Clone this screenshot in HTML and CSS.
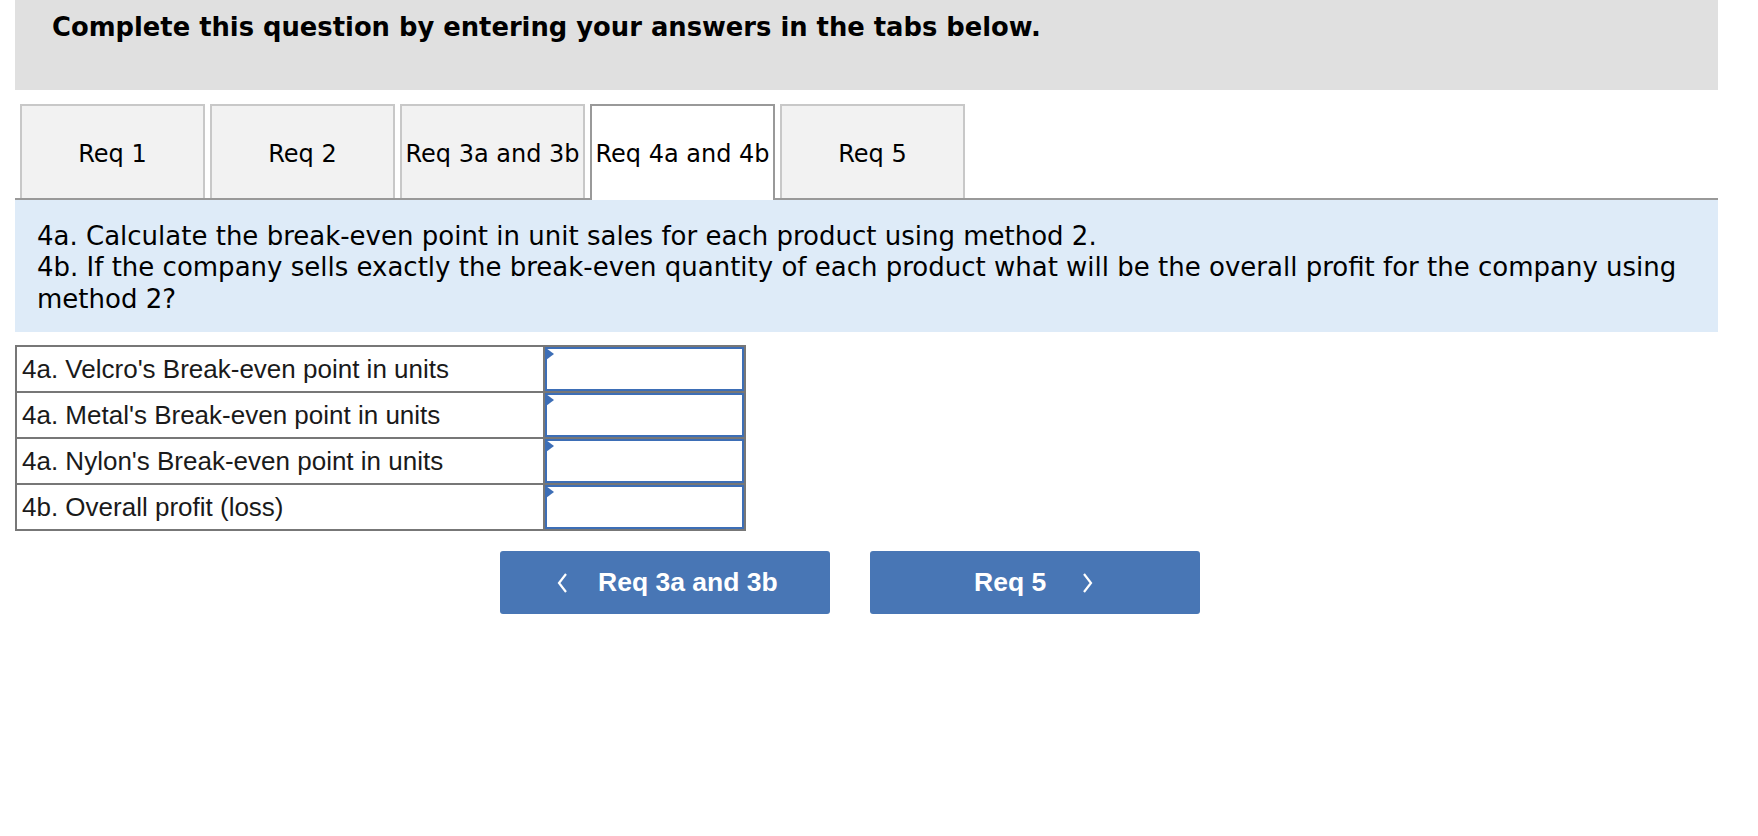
FILE: index.html
```html
<!DOCTYPE html>
<html>
<head>
<meta charset="utf-8">
<link rel="stylesheet" href="styles.css">
</head>
<body>
<div class="page">
  <div class="banner">Complete this question by entering your answers in the tabs below.</div>
  <div class="tabs">
    <div class="tab">Req 1</div>
    <div class="tab">Req 2</div>
    <div class="tab">Req 3a and 3b</div>
    <div class="tab active">Req 4a and 4b</div>
    <div class="tab">Req 5</div>
  </div>
  <div class="prompt">
    <div>4a. Calculate the break-even point in unit sales for each product using method 2.</div>
    <div>4b. If the company sells exactly the break-even quantity of each product what will be the overall profit for the company using method 2?</div>
  </div>
  <table class="answers">
    <colgroup><col class="c1"><col class="c2"></colgroup>
    <tr><td class="label">4a. Velcro's Break-even point in units</td><td class="cell"><div class="input"></div></td></tr>
    <tr><td class="label">4a. Metal's Break-even point in units</td><td class="cell"><div class="input"></div></td></tr>
    <tr><td class="label">4a. Nylon's Break-even point in units</td><td class="cell"><div class="input"></div></td></tr>
    <tr><td class="label">4b. Overall profit (loss)</td><td class="cell"><div class="input"></div></td></tr>
  </table>
  <div class="nav">
    <div class="btn prev">
      <svg class="chev" width="12" height="22" viewBox="0 0 12 22"><path d="M10 2 L3 11 L10 20" fill="none" stroke="#fff" stroke-width="2.2"/></svg>
      <span>Req 3a and 3b</span>
    </div>
    <div class="btn next">
      <span>Req 5</span>
      <svg class="chev" width="12" height="22" viewBox="0 0 12 22"><path d="M2 2 L9 11 L2 20" fill="none" stroke="#fff" stroke-width="2.2"/></svg>
    </div>
  </div>
</div>
</body>
</html>
```
FILE: styles.css
```css
html, body {
  margin: 0;
  padding: 0;
  background: #fff;
}
.page {
  margin-left: 15px;
  width: 1703px;
  font-family: "DejaVu Sans", Verdana, sans-serif;
  color: #000;
}
.banner {
  background: #e0e0e0;
  height: 90px;
  box-sizing: border-box;
  padding: 11px 0 0 37px;
  font-weight: bold;
  font-size: 25.8px;
  line-height: 32px;
}
.tabs {
  display: flex;
  gap: 5px;
  margin-top: 14px;
  padding-left: 5px;
  border-bottom: 2px solid #999;
  height: 94px;
}
.tab {
  width: 185px;
  height: 94px;
  box-sizing: border-box;
  background: #f2f2f2;
  border: 2px solid #c8c8c8;
  border-bottom: none;
  padding-top: 4px;
  display: flex;
  align-items: center;
  justify-content: center;
  font-size: 24px;
  white-space: nowrap;
}
.tab.active {
  background: #fff;
  border-color: #999;
  height: 96px;
  padding-bottom: 2px;
  position: relative;
}
.prompt {
  background: #deebf8;
  padding: 21px 24px 17px 22px;
  font-size: 26px;
  line-height: 31.4px;
}
.answers {
  margin-top: 13px;
  border-collapse: collapse;
  table-layout: fixed;
  width: 729px;
  font-family: "Liberation Sans", Arial, sans-serif;
  font-size: 26px;
  color: #1a1a1a;
}
.c1 { width: 528px; }
.c2 { width: 201px; }
.answers td {
  border: 2px solid #777;
  height: 44px;
  padding: 0;
  white-space: nowrap;
}
.label {
  padding-left: 5px !important;
}
.cell {
  position: relative;
}
.input {
  height: 40px;
  border: 2px solid #3d6eb6;
  background: #fff;
  position: relative;
}
.input::before {
  content: "";
  position: absolute;
  left: -1px;
  top: -1px;
  border-left: 8px solid #3d6eb6;
  border-top: 6px solid transparent;
  border-bottom: 6px solid transparent;
}
.nav {
  display: flex;
  gap: 40px;
  margin-top: 20px;
  margin-left: 485px;
}
.btn {
  width: 330px;
  height: 63px;
  box-sizing: border-box;
  background: #4876b5;
  border-radius: 3px;
  color: #fff;
  font-family: "Liberation Sans", Arial, sans-serif;
  font-weight: bold;
  font-size: 26.5px;
  display: flex;
  align-items: center;
  justify-content: flex-start;
}
.btn.prev { padding-left: 56px; gap: 30px; }
.btn.next { padding-left: 104px; gap: 36px; }
.chev { display: block; }
```
